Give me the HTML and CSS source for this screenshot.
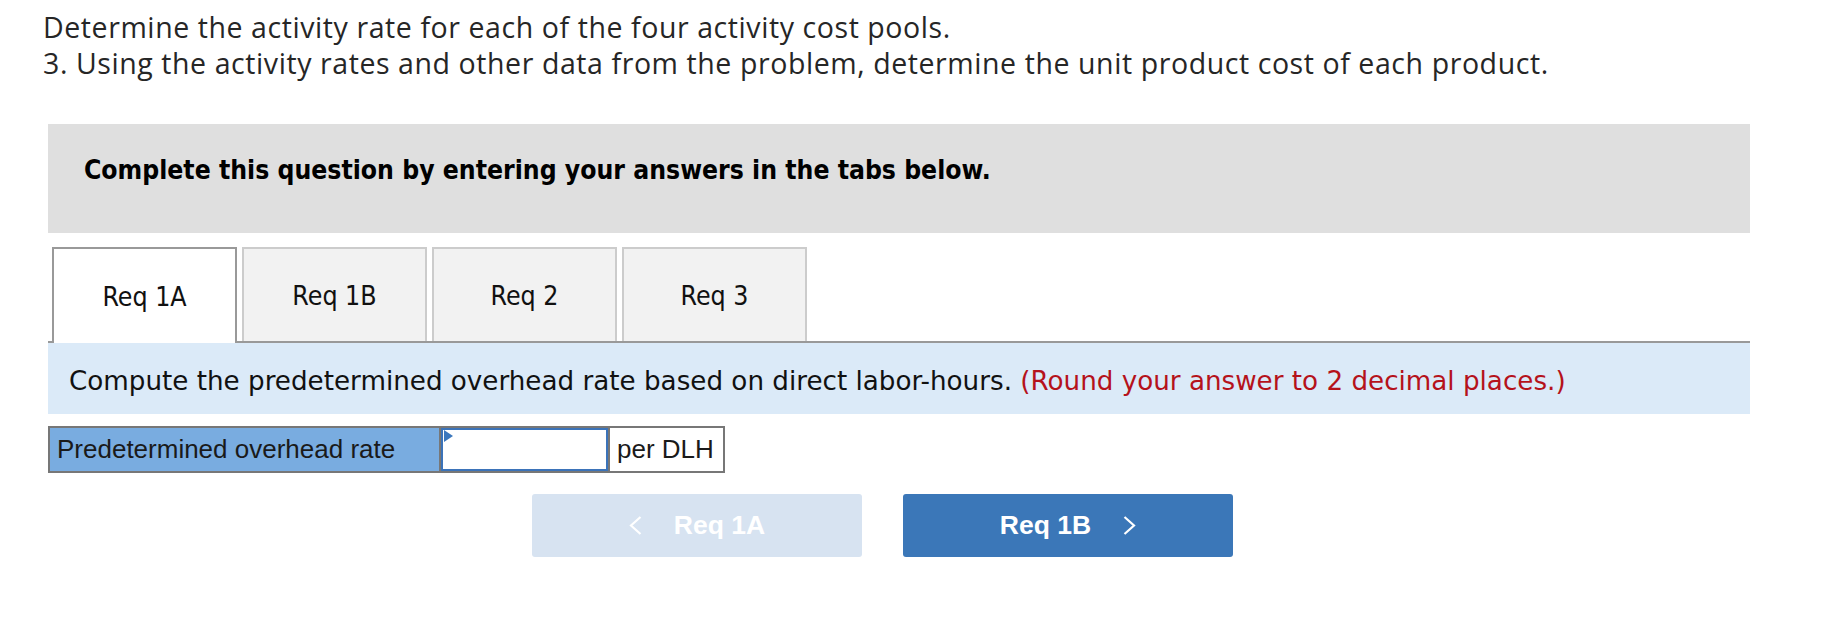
FILE: index.html
```html
<!DOCTYPE html>
<html lang="en">
<head>
<meta charset="utf-8">
<title>Req 1A</title>
<link rel="stylesheet" href="styles.css">
</head>
<body>
<p class="intro">Determine the activity rate for each of the four activity cost pools.<br>3. Using the activity rates and other data from the problem, determine the unit product cost of each product.</p>
<div class="panel">
  <div class="notice">Complete this question by entering your answers in the tabs below.</div>
  <div class="tabs">
    <div class="tab active">Req 1A</div>
    <div class="tab">Req 1B</div>
    <div class="tab">Req 2</div>
    <div class="tab">Req 3</div>
  </div>
  <div class="prompt">Compute the predetermined overhead rate based on direct labor-hours. <span class="hint">(Round your answer to 2 decimal places.)</span></div>
  <div class="answer-row">
    <div class="cell label">Predetermined overhead rate</div>
    <div class="cell input-cell"><div class="input"><span class="flag"></span></div></div>
    <div class="cell unit">per DLH</div>
  </div>
  <div class="nav">
    <div class="btn btn-prev">
      <svg class="chev" width="13" height="19" viewBox="0 0 13 19"><path d="M11.5 1 L2 9.5 L11.5 18" fill="none" stroke="#fff" stroke-width="2.2"/></svg>
      <span>Req 1A</span>
    </div>
    <div class="btn btn-next">
      <span>Req 1B</span>
      <svg class="chev" width="13" height="19" viewBox="0 0 13 19"><path d="M1.5 1 L11 9.5 L1.5 18" fill="none" stroke="#fff" stroke-width="2.2"/></svg>
    </div>
  </div>
</div>
</body>
</html>
```
FILE: styles.css
```css
html, body {
  margin: 0;
  padding: 0;
  background: #fff;
}
.intro {
  margin: 0;
  padding: 9px 0 0 43px;
  font-family: "Open Sans", Lato, sans-serif;
  font-size: 28.5px;
  line-height: 36px;
  letter-spacing: 0.58px;
  color: #262626;
}
.panel {
  margin: 43px 0 0 48px;
  width: 1702px;
}
.notice {
  box-sizing: border-box;
  height: 109px;
  background: #dfdfdf;
  padding: 33px 0 0 36px;
  font-family: "DejaVu Sans Condensed", "DejaVu Sans", sans-serif;
  font-weight: bold;
  font-size: 26.3px;
  line-height: 27px;
  color: #000;
}
.tabs {
  display: flex;
  align-items: flex-end;
  gap: 5px;
  margin-top: 14px;
  padding-left: 4px;
}
.tab {
  box-sizing: border-box;
  width: 185px;
  height: 94px;
  background: #f2f2f2;
  border: 2px solid #cccccc;
  border-bottom: none;
  display: flex;
  align-items: center;
  justify-content: center;
  font-family: "DejaVu Sans Condensed", "DejaVu Sans", sans-serif;
  font-size: 26.5px;
  color: #111;
}
.tab.active {
  height: 96px;
  margin-bottom: -2px;
  background: #fff;
  border-color: #999999;
  position: relative;
  z-index: 1;
}
.prompt {
  box-sizing: border-box;
  height: 73px;
  border-top: 2px solid #999999;
  background: #dbeaf8;
  padding: 25px 0 0 21px;
  font-family: "DejaVu Sans", Verdana, sans-serif;
  font-size: 26.2px;
  line-height: 26px;
  color: #111;
}
.hint {
  color: #b5121b;
}
.answer-row {
  display: flex;
  box-sizing: border-box;
  width: 677px;
  height: 47px;
  margin-top: 12px;
  border: 2px solid #777;
  font-family: "Liberation Sans", Arial, sans-serif;
  font-size: 26px;
  color: #1a1a1a;
}
.cell {
  box-sizing: border-box;
  height: 100%;
  display: flex;
  align-items: center;
}
.label {
  width: 391px;
  background: #79ace0;
  border-right: 2px solid #777;
  padding-left: 7px;
}
.input-cell {
  width: 169px;
  border-right: 2px solid #777;
}
.input {
  box-sizing: border-box;
  width: 167px;
  height: 43px;
  border: 2px solid #3b73b9;
  background: #fff;
  position: relative;
}
.flag {
  position: absolute;
  left: 1px;
  top: 0;
  width: 0;
  height: 0;
  border-top: 6.5px solid transparent;
  border-bottom: 6.5px solid transparent;
  border-left: 9px solid #3b77bd;
}
.unit {
  flex: 1;
  padding-left: 7px;
  background: #fff;
}
.nav {
  display: flex;
  gap: 41px;
  margin-top: 21px;
  padding-left: 484px;
}
.btn {
  box-sizing: border-box;
  width: 330px;
  height: 63px;
  border-radius: 3px;
  display: flex;
  align-items: center;
  justify-content: center;
  gap: 32px;
  font-family: "Liberation Sans", Arial, sans-serif;
  font-weight: bold;
  font-size: 26.5px;
  color: #fff;
}
.btn-prev {
  background: #d7e3f1;
}
.btn-next {
  background: #3b77b8;
}
.chev {
  display: block;
}
```
